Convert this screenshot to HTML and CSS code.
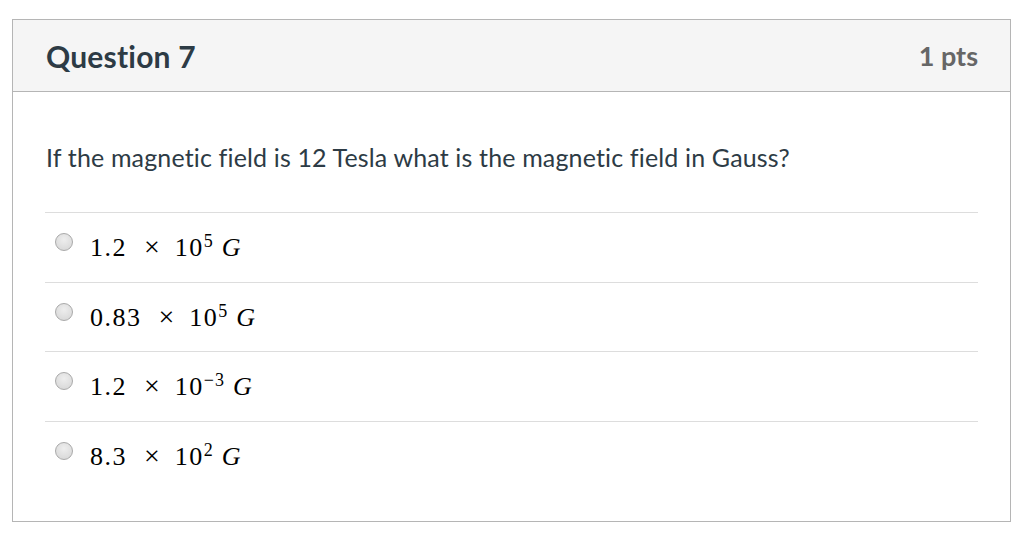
FILE: index.html
```html
<!DOCTYPE html>
<html>
<head>
<meta charset="utf-8">
<link rel="stylesheet" href="styles.css">
</head>
<body>
<div class="card">
  <div class="header">
    <h2 class="title">Question 7</h2>
    <span class="pts">1 pts</span>
  </div>
  <div class="content">
    <p class="question">If the magnetic field is 12 Tesla what is the magnetic field in Gauss?</p>
    <div class="answers">
      <label class="answer"><span class="radio"></span><span class="math"><span class="num">1.2</span><span class="op">×</span><span class="num">10</span><sup>5</sup><i class="unit">G</i></span></label>
      <label class="answer"><span class="radio"></span><span class="math"><span class="num">0.83</span><span class="op">×</span><span class="num">10</span><sup>5</sup><i class="unit">G</i></span></label>
      <label class="answer"><span class="radio"></span><span class="math"><span class="num">1.2</span><span class="op">×</span><span class="num">10</span><sup>−3</sup><i class="unit">G</i></span></label>
      <label class="answer"><span class="radio"></span><span class="math"><span class="num">8.3</span><span class="op">×</span><span class="num">10</span><sup>2</sup><i class="unit">G</i></span></label>
    </div>
  </div>
</div>
</body>
</html>
```

FILE: styles.css
```css
html, body {
  margin: 0;
  padding: 0;
  background: #ffffff;
}
body {
  padding: 19px 13px 0 12px;
  font-family: Lato, "Liberation Sans", sans-serif;
  color: #2d3b45;
}
.card {
  border: 1px solid #b5b5b5;
  height: 503px;
  box-sizing: border-box;
  display: flex;
  flex-direction: column;
}
.header {
  background: #f5f5f5;
  border-bottom: 1px solid #b5b5b5;
  height: 72px;
  box-sizing: border-box;
  display: flex;
  align-items: center;
  justify-content: space-between;
  padding: 0 32px 0 33px;
}
.title {
  margin: 0;
  font-size: 30px;
  font-weight: 700;
  color: #2d3b45;
  letter-spacing: 0.2px;
}
.pts {
  font-size: 27px;
  font-weight: 700;
  color: #666666;
}
.content {
  padding: 0 32px 0 32px;
}
.question {
  margin: 0 0 38px 0;
  padding: 48px 0 0 1px;
  font-size: 25px;
  line-height: 34px;
  letter-spacing: 0.15px;
  color: #2d3b45;
}
.answers {
  display: flex;
  flex-direction: column;
}
.answer {
  display: flex;
  align-items: center;
  height: 69.5px;
  border-top: 1px solid #dddddd;
  box-sizing: border-box;
  padding-left: 10px;
}
.radio {
  width: 16px;
  height: 16px;
  border-radius: 50%;
  border: 1px solid #a9a9a9;
  background: radial-gradient(circle at 50% 35%, #eeeeee, #d4d4d4);
  flex: none;
  margin-right: 17px;
  margin-top: -10px;
}
.math {
  font-family: "Liberation Serif", "DejaVu Serif", serif;
  font-size: 26px;
  color: #000000;
  margin-top: 2px;
  white-space: nowrap;
}
.num {
  letter-spacing: 1.5px;
}
.op {
  display: inline-block;
  margin: 0 15px 0 17px;
  font-size: 28px;
  line-height: 1;
}
sup {
  font-size: 18px;
  vertical-align: 0;
  position: relative;
  top: -9px;
  margin-left: 0;
  letter-spacing: 1px;
}
.unit {
  margin-left: 8px;
}
```
